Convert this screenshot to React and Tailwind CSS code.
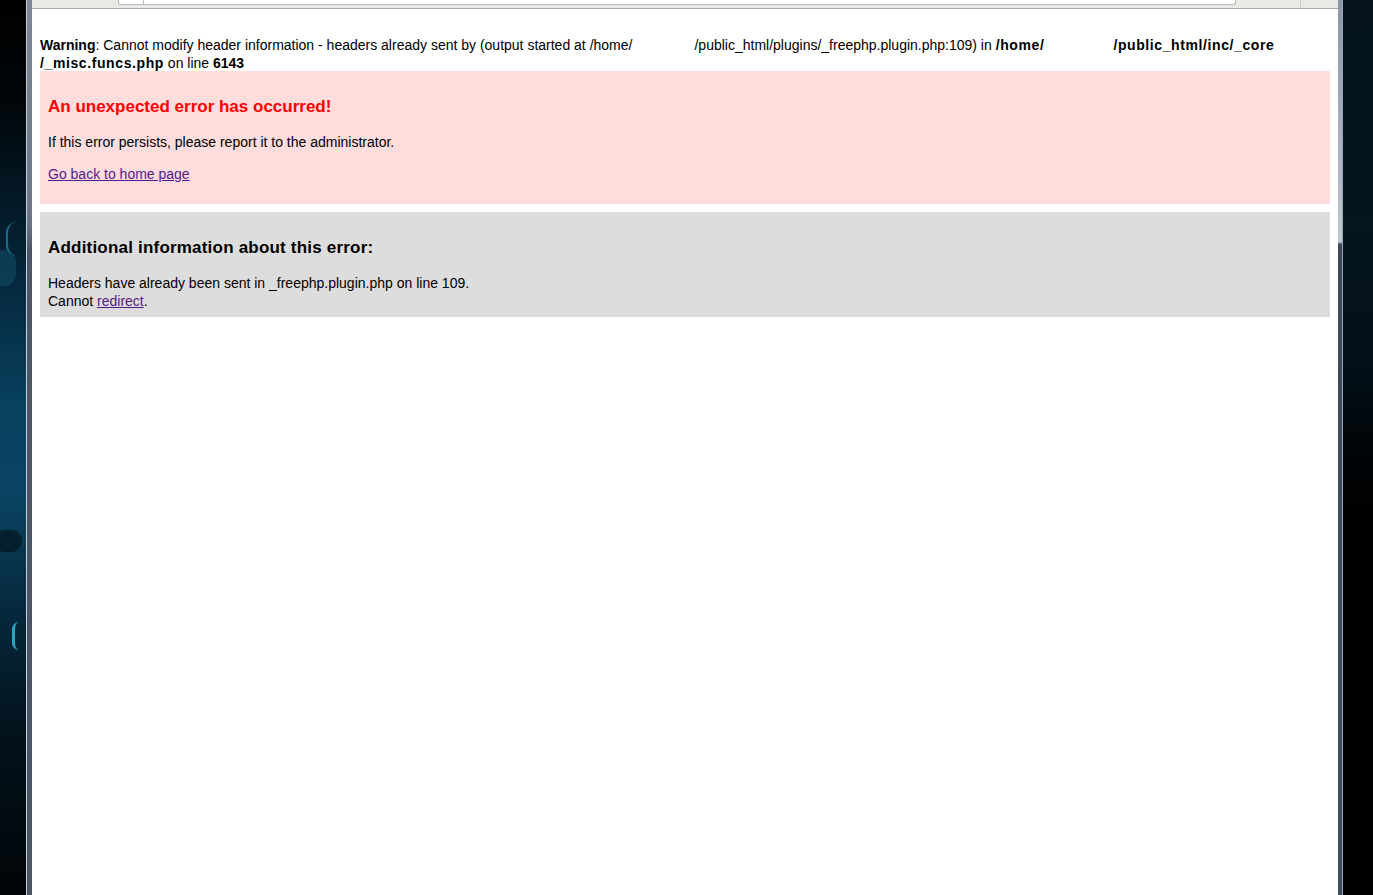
export default function App() {
  return (
    <div className="w-[1373px] h-[895px] flex overflow-hidden bg-black font-['Liberation_Sans',Arial,sans-serif]">
      {/* left desktop strip */}
      <div className="w-[26px] shrink-0 h-full bg-[linear-gradient(180deg,#000000_0%,#01070b_12%,#05263a_30%,#08405e_45%,#0a4463_55%,#06293d_68%,#03121b_82%,#010508_100%)] relative overflow-hidden">
        <div className="absolute left-[6px] top-[222px] w-[22px] h-[34px] rounded-full border-l-[2px] border-[#2a9fc0] opacity-60"></div>
        <div className="absolute left-[-8px] top-[250px] w-[24px] h-[36px] rounded-full bg-[#15607a] opacity-40"></div>
        <div className="absolute left-[-6px] top-[530px] w-[28px] h-[22px] rounded-full bg-[#041a26] opacity-80"></div>
        <div className="absolute left-[12px] top-[622px] w-[14px] h-[28px] rounded-full border-l-[3px] border-[#2fc4dc] opacity-80"></div>
      </div>
      {/* left window border */}
      <div className="w-[6px] shrink-0 h-full flex">
        <div className="w-[1px] h-full bg-[#c8d0da]"></div>
        <div className="flex-1 h-full bg-[linear-gradient(180deg,#7c8898_0%,#6a7686_25%,#4b5667_28%,#4a5566_100%)]"></div>
      </div>
      {/* main browser content */}
      <div className="flex-1 min-w-0 h-full flex flex-col bg-white">
        <div className="h-[9px] shrink-0 bg-[#e9e9e5] border-b border-[#a9a9a5] relative">
          <div className="absolute left-[86px] top-0 w-[1118px] h-[5px] bg-white border-b border-x border-[#b8b8b4] rounded-b-[3px]"></div>
          <div className="absolute left-[111px] top-0 w-[1px] h-[5px] bg-[#c0c0bc]"></div>
          <div className="absolute left-[1268px] top-0 w-[1px] h-[8px] bg-[#cfcfcb]"></div>
        </div>
        <div className="px-[8px] pt-[27px] text-[14px] leading-[18px] text-black">
          <div className="mb-[-1px]">
            <span className="whitespace-nowrap">
              <b>Warning</b>: Cannot modify header information - headers already sent by (output started at /home/<span className="inline-block w-[62px]"></span>/public_html/plugins/_freephp.plugin.php:109) in <b className="tracking-[0.6px]">/home/</b><span className="inline-block w-[69px]"></span><b className="tracking-[0.6px]">/public_html/inc/_core</b>
            </span>
            <br />
            <b className="tracking-[0.6px]">/_misc.funcs.php</b> on line <b>6143</b>
          </div>
          <div className="relative bg-[#ffdddd] px-[8px] pt-[25px] pb-[21px]">
            <div className="text-[17px] leading-[22px] font-bold text-[#ff0000]">An unexpected error has occurred!</div>
            <div className="mt-[15px]">If this error persists, please report it to the administrator.</div>
            <div className="mt-[14px]"><a href="#" className="underline text-[#551a8b]">Go back to home page</a></div>
          </div>
          <div className="mt-[8px] bg-[#dddddd] px-[8px] pt-[25px] pb-[7px]">
            <div className="text-[17px] leading-[22px] font-bold tracking-[0.2px]">Additional information about this error:</div>
            <div className="mt-[15px]">
              Headers have already been sent in _freephp.plugin.php on line 109.<br />
              Cannot <a href="#" className="underline text-[#551a8b]">redirect</a>.
            </div>
          </div>
        </div>
      </div>
      {/* right window border */}
      <div className="w-[5px] shrink-0 h-full flex">
        <div className="flex-1 h-full bg-[linear-gradient(180deg,#8a96a6_0%,#b0bac6_20%,#c0c8d2_27%,#3e4a5c_27.3%,#414d5f_100%)]"></div>
        <div className="w-[1px] h-full bg-[#9aa6b6]"></div>
      </div>
      {/* right desktop strip */}
      <div className="w-[30px] shrink-0 h-full bg-[linear-gradient(180deg,#03121b_0%,#04151f_25%,#03101a_40%,#010508_50%,#000000_58%,#000000_100%)]"></div>
    </div>
  );
}
